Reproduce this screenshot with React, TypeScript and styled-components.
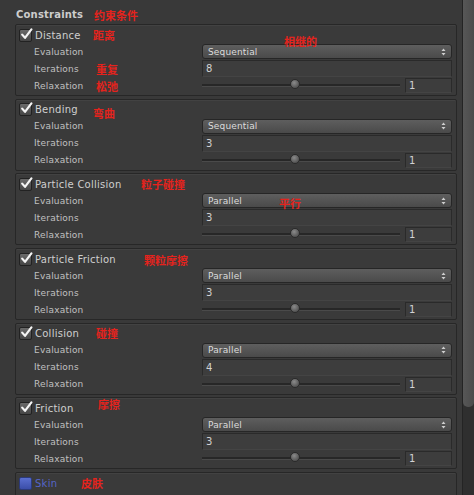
import React from 'react';
import styled, {createGlobalStyle} from "styled-components";

const GlobalStyle = createGlobalStyle`
  html, body {
    margin: 0;
    padding: 0;
    background-color: #393939;
  }
`

type Note = { text: string; left: number; top: number }

type Constraint = {
  name: string
  mode: string
  iterations: number
  relaxation: number
  notes: Note[]
}

const constraints: Constraint[] = [
  {
    name: "Distance", mode: "Sequential", iterations: 8, relaxation: 1,
    notes: [
      {text: "距离", left: 77, top: 2},
      {text: "相继的", left: 268, top: 8},
      {text: "重复", left: 80, top: 36},
      {text: "松弛", left: 80, top: 53},
    ]
  },
  {
    name: "Bending", mode: "Sequential", iterations: 3, relaxation: 1,
    notes: [{text: "弯曲", left: 77, top: 5}]
  },
  {
    name: "Particle Collision", mode: "Parallel", iterations: 3, relaxation: 1,
    notes: [
      {text: "粒子碰撞", left: 125, top: 2},
      {text: "平行", left: 263, top: 21},
    ]
  },
  {
    name: "Particle Friction", mode: "Parallel", iterations: 3, relaxation: 1,
    notes: [{text: "颗粒摩擦", left: 128, top: 3}]
  },
  {
    name: "Collision", mode: "Parallel", iterations: 4, relaxation: 1,
    notes: [{text: "碰撞", left: 80, top: 1}]
  },
  {
    name: "Friction", mode: "Parallel", iterations: 3, relaxation: 1,
    notes: [{text: "摩擦", left: 82, top: -2}]
  },
]

const CheckMark = () => (
    <svg width="13" height="13" viewBox="0 0 13 13">
      <path d="M2.2 6.6 L5 9.8 L11.4 1.4" fill="none" stroke="#f4f4f4" strokeWidth="2.2" strokeLinecap="round"
            strokeLinejoin="round"/>
    </svg>
)

const SortArrows = () => (
    <svg width="5" height="8" viewBox="0 0 5 8">
      <path d="M2.5 0.5 L4.5 3 L0.5 3 Z M2.5 7.5 L4.5 5 L0.5 5 Z" fill="#cfcfcf"/>
    </svg>
)

export default function App() {
  return (
      <>
        <GlobalStyle/>
        <Inspector>
          <Content>
            <Title>Constraints<Annotation left={79} top={7}>约束条件</Annotation></Title>
            <List>
              {constraints.map((c) => (
                  <Panel key={c.name}>
                    <Header>
                      <Checkbox><CheckMark/></Checkbox>
                      <HeaderLabel>{c.name}</HeaderLabel>
                    </Header>
                    <Row>
                      <Label>Evaluation</Label>
                      <Dropdown>
                        <span>{c.mode}</span>
                        <SortArrows/>
                      </Dropdown>
                    </Row>
                    <Row>
                      <Label>Iterations</Label>
                      <Field>{c.iterations}</Field>
                    </Row>
                    <Row>
                      <Label>Relaxation</Label>
                      <Slider>
                        <Track>
                          <Thumb/>
                        </Track>
                        <NumberField>{c.relaxation}</NumberField>
                      </Slider>
                    </Row>
                    {c.notes.map((n) => (
                        <Annotation key={n.text} left={n.left} top={n.top}>{n.text}</Annotation>
                    ))}
                  </Panel>
              ))}
              <Panel>
                <Header>
                  <Checkbox $off/>
                  <HeaderLabel $active>Skin</HeaderLabel>
                </Header>
                <Annotation left={65} top={2}>皮肤</Annotation>
              </Panel>
            </List>
          </Content>
          <Scrollbar>
            <ScrollThumb/>
          </Scrollbar>
        </Inspector>
      </>
  );
}

const Inspector = styled.div`
  display: flex;
  height: 495px;
  overflow: hidden;
  background-color: #393939;
  font-family: "DejaVu Sans", Verdana, sans-serif;
  color: #c4c4c4;
`

const Content = styled.div`
  flex: 1;
  padding: 0 5px 0 15px;
`

const Title = styled.div`
  position: relative;
  padding: 9px 0 0 1px;
  height: 15px;
  line-height: 12px;
  font-size: 10px;
  font-weight: 700;
  letter-spacing: 0.2px;
  color: #cdcdcd;
`

const List = styled.div`
  display: flex;
  flex-direction: column;
  gap: 2.7px;
`

const Panel = styled.div`
  position: relative;
  flex-shrink: 0;
  height: 72px;
  padding-top: 2px;
  box-sizing: border-box;
  border: 1px solid #272727;
  border-radius: 2px;
  background-color: #3a3a3a;
  box-shadow: inset 0 1px 0 #424242;
`

const Header = styled.div`
  display: flex;
  align-items: center;
  gap: 3px;
  height: 16px;
  padding-left: 3px;
`

const Checkbox = styled.span<{ $off?: boolean }>`
  position: relative;
  display: flex;
  align-items: center;
  justify-content: center;
  width: 11px;
  height: 11px;
  border: 1px solid ${p => p.$off ? "#2c3a7a" : "#222"};
  border-radius: 2px;
  background: ${p => p.$off
      ? "linear-gradient(#5a6fd0, #3b4ea8)"
      : "linear-gradient(#6a6a6a, #454545)"};

  svg {
    position: absolute;
    left: 0;
    top: -2px;
  }
`

const HeaderLabel = styled.span<{ $active?: boolean }>`
  font-size: 10px;
  letter-spacing: 0.25px;
  color: ${p => p.$active ? "#5565c8" : "#cfcfcf"};
`

const Row = styled.div`
  display: flex;
  align-items: center;
  height: 17px;
  padding: 0 4px 0 18px;
`

const Label = styled.span`
  width: 168px;
  flex-shrink: 0;
  font-size: 9px;
  letter-spacing: 0.2px;
  color: #c0c0c0;
`

const Dropdown = styled.div`
  flex: 1;
  display: flex;
  align-items: center;
  justify-content: space-between;
  height: 13px;
  padding: 0 5px;
  border: 1px solid #262626;
  border-radius: 3px;
  background: linear-gradient(#5e5e5e, #4a4a4a);
  font-size: 9px;
  letter-spacing: 0.15px;
  color: #dcdcdc;
`

const Field = styled.div`
  flex: 1;
  height: 15px;
  line-height: 15px;
  padding: 0 3px;
  border: 1px solid #2a2a2a;
  border-bottom-color: #444;
  background-color: #3d3d3d;
  font-size: 10px;
  color: #d2d2d2;
`

const Slider = styled.div`
  flex: 1;
  display: flex;
  align-items: center;
  gap: 5px;
`

const Track = styled.div`
  position: relative;
  flex: 1;
  height: 2px;
  background-color: #272727;
  border-bottom: 1px solid #4a4a4a;
`

const Thumb = styled.span`
  position: absolute;
  left: calc(47% - 5px);
  top: -5px;
  width: 10px;
  height: 10px;
  border-radius: 50%;
  border: 1px solid #2a2a2a;
  box-sizing: border-box;
  background: radial-gradient(circle at 40% 35%, #8a8a8a, #555 70%);
`

const NumberField = styled(Field)`
  flex: 0 0 39px;
  height: 13px;
  line-height: 13px;
`

const Annotation = styled.span<{ left: number; top: number }>`
  position: absolute;
  left: ${p => p.left}px;
  top: ${p => p.top}px;
  line-height: 16px;
  font-family: "Noto Sans CJK SC", sans-serif;
  font-size: 11px;
  font-weight: 700;
  letter-spacing: 0;
  color: #e5231d;
  white-space: nowrap;
`

const Scrollbar = styled.div`
  width: 11px;
  border-left: 1px solid #242424;
  background-color: #2f2f2f;
`

const ScrollThumb = styled.div`
  height: 407px;
  border-radius: 0 0 5px 5px;
  background: linear-gradient(90deg, #575757, #4b4b4b);
`
